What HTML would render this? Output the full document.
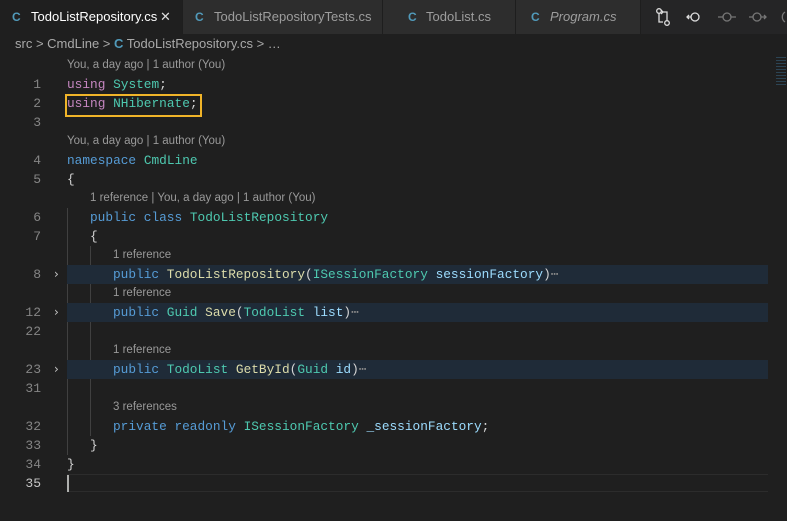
<!DOCTYPE html><html><head><style>
*{margin:0;padding:0;box-sizing:border-box}
body{width:787px;height:521px;background:#1f1f1f;overflow:hidden;position:relative;font-family:"Liberation Sans",sans-serif}
.tabs{position:absolute;top:0;left:0;width:787px;height:34px;background:#252526}
.tab{position:absolute;top:0;height:34px;font-size:13px;color:#9d9d9d;line-height:34px;border-right:1px solid #1e1e1e;background:#2d2d2d}
.tab.a{background:#1f1f1f;color:#fff}
.ic{position:absolute;left:12px;top:0;color:#519aba;font-weight:bold;font-size:12px}
.crumb{position:absolute;top:36px;left:15px;font-size:13px;color:#a9a9a9}
.row{position:absolute;left:0;height:19px;width:787px;line-height:19px}
.ln{position:absolute;right:746px;font-family:"Liberation Mono",monospace;font-size:13px;color:#858585}
.code{position:absolute;left:67px;font-family:"Liberation Mono",monospace;font-size:12.8px;color:#d4d4d4;white-space:pre}
.lens{position:absolute;font-size:11.5px;color:#999}
.hl{position:absolute;left:67px;width:701px;height:19px;background:#1f2b38}
.chev{position:absolute;left:54px;color:#c5c5c5;font-size:12px;font-family:"DejaVu Sans"}
.k{color:#c586c0}.t{color:#4ec9b0}.b{color:#569cd6}.m{color:#dcdcaa}.p{color:#9cdcfe}.d{color:#888}
.g{position:absolute;width:1px;background:#404040}
</style></head><body>
<div class="tabs">
<div class="tab a" style="left:0;width:183px"><span class="ic">C</span><span style="position:absolute;left:31px">TodoListRepository.cs</span><span style="position:absolute;left:160px;color:#ddd">✕</span></div>
<div class="tab" style="left:183px;width:200px"><span class="ic">C</span><span style="position:absolute;left:31px">TodoListRepositoryTests.cs</span></div>
<div class="tab" style="left:383px;width:133px"><span class="ic" style="left:25px">C</span><span style="position:absolute;left:43px">TodoList.cs</span></div>
<div class="tab" style="left:516px;width:125px"><span class="ic" style="left:15px">C</span><span style="position:absolute;left:34px;font-style:italic">Program.cs</span></div>
<svg style="position:absolute;left:645px;top:0" width="142" height="34" fill="none" stroke-width="1.3">
<g stroke="#ddd"><circle cx="14" cy="11" r="2.3"/><circle cx="22" cy="23" r="2.3"/><path d="M14 13.5V22h4M22 20.5V12h-4M16 10l2 2-2 2"/><circle cx="50" cy="17" r="4"/><path d="M46 17h-4M44 15l-2 2 2 2"/></g>
<g stroke="#777"><circle cx="82" cy="17" r="4"/><path d="M73 17h5M86 17h5"/><circle cx="112" cy="17" r="4"/><path d="M104 17h4M116 17h5M119 15l2 2-2 2"/><path d="M140 12a6 6 0 0 0 0 10"/></g></svg>
</div>
<div class="crumb">src &gt; CmdLine &gt; <span style="color:#519aba;font-weight:bold">C</span> TodoListRepository.cs &gt; …</div>
<div style="position:absolute;left:776px;top:57px;width:10px;height:30px;opacity:.5;background:repeating-linear-gradient(#3a6a8a 0 1px,transparent 1px 3px)"></div>

<div class="g" style="left:67px;top:208px;height:247px"></div>
<div class="g" style="left:90px;top:246px;height:190px"></div>

<div class="hl" style="top:265px"></div><div class="hl" style="top:303px"></div><div class="hl" style="top:360px"></div>
<div style="position:absolute;left:67px;top:474px;width:701px;height:18px;border-top:1px solid #2c2c2c;border-bottom:1px solid #2c2c2c"></div>
<div style="position:absolute;left:65px;top:94px;width:137px;height:23px;border:2px solid #f0b429"></div>

<div class="row" style="top:56px"><span class="lens" style="left:67px">You, a day ago | 1 author (You)</span></div>
<div class="row" style="top:75px"><span class="ln">1</span><span class="code"><span class="k">using</span> <span class="t">System</span>;</span></div>
<div class="row" style="top:94px"><span class="ln">2</span><span class="code"><span class="k">using</span> <span class="t">NHibernate</span>;</span></div>
<div class="row" style="top:113px"><span class="ln">3</span></div>
<div class="row" style="top:132px"><span class="lens" style="left:67px">You, a day ago | 1 author (You)</span></div>
<div class="row" style="top:151px"><span class="ln">4</span><span class="code"><span class="b">namespace</span> <span class="t">CmdLine</span></span></div>
<div class="row" style="top:170px"><span class="ln">5</span><span class="code">{</span></div>
<div class="row" style="top:189px"><span class="lens" style="left:90px">1 reference | You, a day ago | 1 author (You)</span></div>
<div class="row" style="top:208px"><span class="ln">6</span><span class="code" style="left:90px"><span class="b">public</span> <span class="b">class</span> <span class="t">TodoListRepository</span></span></div>
<div class="row" style="top:227px"><span class="ln">7</span><span class="code" style="left:90px">{</span></div>
<div class="row" style="top:246px"><span class="lens" style="left:113px">1 reference</span></div>
<div class="row" style="top:265px"><span class="ln">8</span><span class="chev">›</span><span class="code" style="left:113px"><span class="b">public</span> <span class="m">TodoListRepository</span>(<span class="t">ISessionFactory</span> <span class="p">sessionFactory</span>)<span class="d">⋯</span></span></div>
<div class="row" style="top:284px"><span class="lens" style="left:113px">1 reference</span></div>
<div class="row" style="top:303px"><span class="ln">12</span><span class="chev">›</span><span class="code" style="left:113px"><span class="b">public</span> <span class="t">Guid</span> <span class="m">Save</span>(<span class="t">TodoList</span> <span class="p">list</span>)<span class="d">⋯</span></span></div>
<div class="row" style="top:322px"><span class="ln">22</span></div>
<div class="row" style="top:341px"><span class="lens" style="left:113px">1 reference</span></div>
<div class="row" style="top:360px"><span class="ln">23</span><span class="chev">›</span><span class="code" style="left:113px"><span class="b">public</span> <span class="t">TodoList</span> <span class="m">GetById</span>(<span class="t">Guid</span> <span class="p">id</span>)<span class="d">⋯</span></span></div>
<div class="row" style="top:379px"><span class="ln">31</span></div>
<div class="row" style="top:398px"><span class="lens" style="left:113px">3 references</span></div>
<div class="row" style="top:417px"><span class="ln">32</span><span class="code" style="left:113px"><span class="b">private</span> <span class="b">readonly</span> <span class="t">ISessionFactory</span> <span class="p">_sessionFactory</span>;</span></div>
<div class="row" style="top:436px"><span class="ln">33</span><span class="code" style="left:90px">}</span></div>
<div class="row" style="top:455px"><span class="ln">34</span><span class="code">}</span></div>
<div class="row" style="top:474px"><span class="ln" style="color:#c6c6c6">35</span><span style="position:absolute;left:67px;top:1px;width:2px;height:17px;background:#aeafad"></span></div>
</body></html>
